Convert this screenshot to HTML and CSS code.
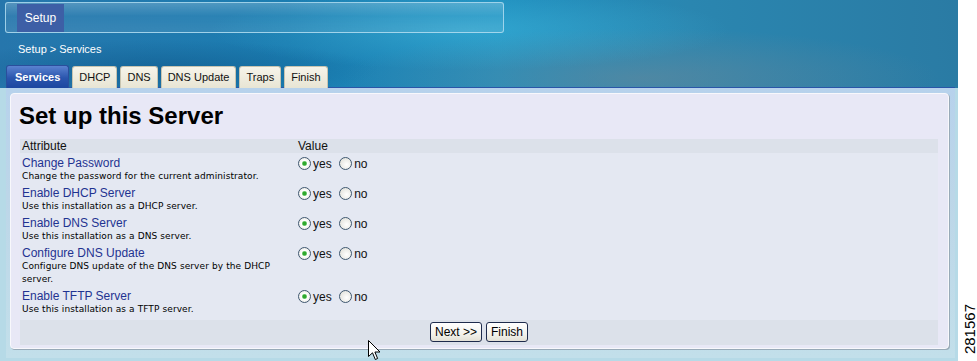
FILE: index.html
```html
<!DOCTYPE html>
<html lang="en">
<head>
    <meta charset="UTF-8">
    <title>Setup - Services</title>
    <link rel="stylesheet" href="styles.css">
</head>
<body>
    <div class="page">
        <div class="screen">
            <div class="topbar">
                <span class="toptab">Setup</span>
            </div>
            <div class="crumb">Setup &gt; Services</div>

            <ul class="tabs">
                <li class="tab active">Services</li>
                <li class="tab">DHCP</li>
                <li class="tab">DNS</li>
                <li class="tab">DNS Update</li>
                <li class="tab">Traps</li>
                <li class="tab">Finish</li>
            </ul>

            <div class="frame">
                <div class="panel">
                    <h1>Set up this Server</h1>
                    <table class="attrs">
                        <thead>
                            <tr><th class="col-attr">Attribute</th><th>Value</th></tr>
                        </thead>
                        <tbody>
                            <tr>
                                <td>
                                    <a href="#" class="name">Change Password</a>
                                    <div class="desc">Change the password for the current administrator.</div>
                                </td>
                                <td>
                                    <label class="opt"><input type="radio" name="pw" checked>yes</label>
                                    <label class="opt"><input type="radio" name="pw">no</label>
                                </td>
                            </tr>
                            <tr>
                                <td>
                                    <a href="#" class="name">Enable DHCP Server</a>
                                    <div class="desc">Use this installation as a DHCP server.</div>
                                </td>
                                <td>
                                    <label class="opt"><input type="radio" name="dhcp" checked>yes</label>
                                    <label class="opt"><input type="radio" name="dhcp">no</label>
                                </td>
                            </tr>
                            <tr>
                                <td>
                                    <a href="#" class="name">Enable DNS Server</a>
                                    <div class="desc">Use this installation as a DNS server.</div>
                                </td>
                                <td>
                                    <label class="opt"><input type="radio" name="dns" checked>yes</label>
                                    <label class="opt"><input type="radio" name="dns">no</label>
                                </td>
                            </tr>
                            <tr>
                                <td>
                                    <a href="#" class="name">Configure DNS Update</a>
                                    <div class="desc">Configure DNS update of the DNS server by the DHCP server.</div>
                                </td>
                                <td>
                                    <label class="opt"><input type="radio" name="ddns" checked>yes</label>
                                    <label class="opt"><input type="radio" name="ddns">no</label>
                                </td>
                            </tr>
                            <tr class="last">
                                <td>
                                    <a href="#" class="name">Enable TFTP Server</a>
                                    <div class="desc">Use this installation as a TFTP server.</div>
                                </td>
                                <td>
                                    <label class="opt"><input type="radio" name="tftp" checked>yes</label>
                                    <label class="opt"><input type="radio" name="tftp">no</label>
                                </td>
                            </tr>
                        </tbody>
                        <tfoot>
                            <tr>
                                <td colspan="2">
                                    <button type="button" class="btn">Next &gt;&gt;</button>
                                    <button type="button" class="btn">Finish</button>
                                </td>
                            </tr>
                        </tfoot>
                    </table>
                </div>
            </div>

            <!-- mouse pointer left in the capture -->
            <svg class="cursor" width="13" height="21" viewBox="0 0 13 21">
                <path d="M0.5 0.5 L0.5 16.5 L4.5 12.8 L7.3 19.5 L9.6 18.5 L6.9 12 L12 12 Z" fill="#fff" stroke="#000" stroke-width="1"/>
            </svg>
        </div>
        <div class="side"><span class="fig">281567</span></div>
    </div>
</body>
</html>
```

FILE: styles.css
```css
/* page frame */
body {
    margin: 0;
    background-color: #fff;
    font-family: "Liberation Sans", Arial, sans-serif;
}

.page {
    display: flex;
    width: 977px;
    height: 361px;
    overflow: hidden;
}

.screen {
    position: relative;
    width: 958px;
    height: 361px;
    flex: none;
    background-color: #b6dae7;
    background-image:
        radial-gradient(ellipse 260px 40px at 470px 30px, rgba(70, 190, 225, 0.45), transparent),
        radial-gradient(ellipse 300px 50px at 640px 78px, rgba(110, 135, 150, 0.55), transparent),
        radial-gradient(ellipse 220px 30px at 160px 70px, rgba(10, 80, 130, 0.5), transparent),
        linear-gradient(90deg, #2676ac 0%, #1b7db1 30%, #1f8fbf 52%, #2a86b0 72%, #2a7ba4 100%);
    background-size: 100% 88px;
    background-repeat: no-repeat;
}

.side {
    flex: 1;
    display: flex;
    align-items: flex-end;
    justify-content: flex-end;
    padding: 0 1px 7px 0;
}

.fig {
    writing-mode: vertical-rl;
    transform: rotate(180deg);
    font-size: 15px;
    line-height: 12px;
    color: #000;
}

/* header */
.topbar {
    margin: 2px 0 0 5px;
    width: 497px;
    height: 29px;
    border: 1px solid rgba(175, 220, 240, 0.85);
    border-radius: 3px;
    background: linear-gradient(rgba(255, 255, 255, 0.22), rgba(255, 255, 255, 0.06) 45%, rgba(255, 255, 255, 0.1));
    display: flex;
    align-items: stretch;
}

.toptab {
    margin: 1px 0 0 11px;
    width: 47px;
    background-color: #3d5fa6;
    color: #fff;
    font-size: 12px;
    display: flex;
    align-items: center;
    justify-content: center;
}

.crumb {
    margin-top: 10px;
    padding-left: 18px;
    font-size: 11px;
    line-height: 13px;
    color: #fff;
}

/* tabs */
.tabs {
    list-style: none;
    margin: 9px 0 0 6px;
    padding: 0;
    display: flex;
    gap: 3px;
    height: 22px;
}

.tab {
    padding: 0 6px;
    font-size: 11px;
    color: #111;
    background: linear-gradient(#f6f4ea, #e8e5d4);
    border: 1px solid #c8c4b0;
    border-bottom: none;
    border-radius: 3px 3px 0 0;
    height: 21px;
    margin-top: 1px;
    line-height: 21px;
}

.tab.active {
    padding: 0 8px;
    font-weight: bold;
    color: #fff;
    background: linear-gradient(#5a82d0, #2a55ad 55%, #1d47a0);
    border-color: #2a4f9c;
    height: 22px;
    margin-top: 0;
    line-height: 23px;
}

/* content */
.frame {
    margin-left: 6px;
    width: 949px;
    border-top: 1px solid #2a56a8;
    padding: 5px 6px 9px 4px;
    box-sizing: border-box;
    background: linear-gradient(#b7d2ec, #bcd6e8 40%, #c2dfea);
}

.panel {
    background-color: #e8e8f6;
    border: 1px solid #f8f8fc;
    border-radius: 4px;
    box-shadow: 1px 1px 0 #98aab8;
    padding: 8px 10px 3px 9px;
}

h1 {
    margin: 0 0 9px -1px;
    font-size: 24px;
    line-height: 28px;
    color: #000;
}

.attrs {
    width: 100%;
    border-collapse: collapse;
    background-color: #e4e8f2;
}

.attrs th {
    background-color: #dce1ea;
    font-weight: normal;
    font-size: 12px;
    line-height: 14px;
    text-align: left;
    padding: 0 2px;
    color: #111;
}

.col-attr {
    width: 272px;
}

.attrs td {
    vertical-align: top;
    padding: 3px 2px 0;
}

.attrs tr.last td {
    padding-bottom: 4px;
}

.name {
    display: block;
    font-size: 12px;
    line-height: 14px;
    color: #1f3391;
    text-decoration: none;
}

.desc {
    font-family: "DejaVu Sans", Verdana, sans-serif;
    font-size: 9px;
    letter-spacing: 0.1px;
    line-height: 13px;
    color: #000;
}

.opt {
    display: inline-flex;
    align-items: center;
    height: 14px;
    font-size: 12px;
    color: #111;
    margin-right: 3px;
}

.opt input {
    appearance: none;
    -webkit-appearance: none;
    width: 13px;
    height: 13px;
    margin: 0 2px 0 0;
    border: 1px solid #3e5770;
    border-radius: 50%;
    background: radial-gradient(circle at 60% 60%, #ffffff, #dcdcd4);
    box-sizing: border-box;
}

.opt input:checked {
    background: radial-gradient(circle, #2fa82f 0 1.6px, #8ed88e 2.3px, #fff 3px, #e2e2da);
}

.attrs tfoot td {
    background-color: #dce1ea;
    text-align: center;
    padding: 2px 0 3px;
    font-size: 0;
}

.btn {
    height: 20px;
    padding: 0 4px;
    margin: 0 2px;
    font-family: "Liberation Sans", Arial, sans-serif;
    font-size: 12px;
    color: #000;
    border: 1px solid #1e2b4c;
    border-radius: 3px;
    background: linear-gradient(#ffffff, #f3f2ec 60%, #e3e1d6);
}

.cursor {
    position: absolute;
    left: 368px;
    top: 340px;
}
```
